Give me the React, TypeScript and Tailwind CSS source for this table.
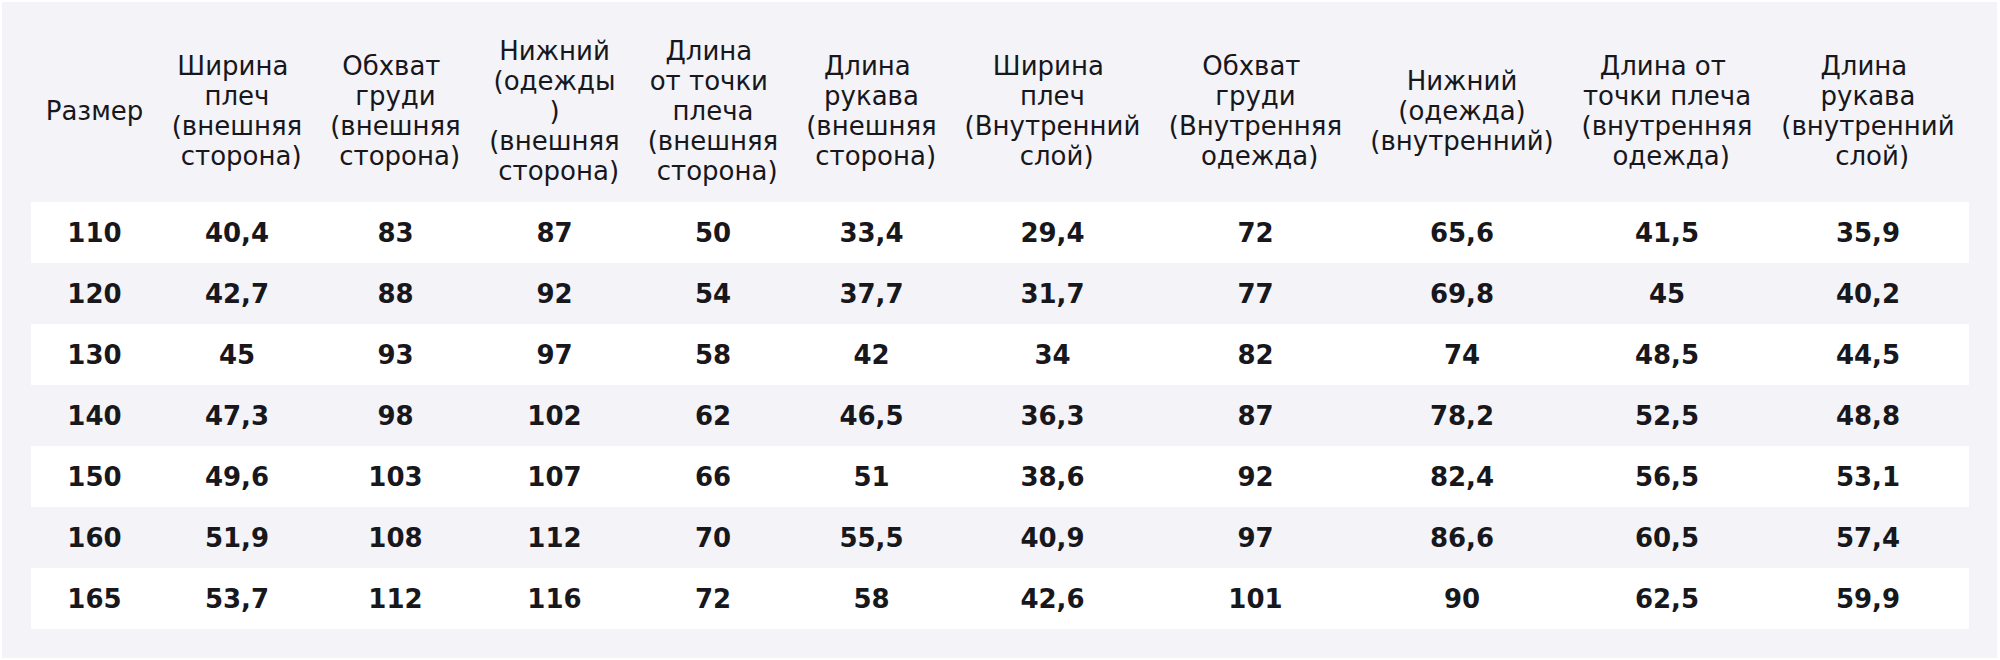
const colWidths = [
  "w-[127px]",
  "w-[158px]",
  "w-[159px]",
  "w-[159px]",
  "w-[158px]",
  "w-[159px]",
  "w-[203px]",
  "w-[203px]",
  "w-[210px]",
  "w-[200px]",
  "w-[202px]",
];

// each header line is drawn as-is (whitespace kept) so the odd centring of the source survives
const headers: string[][] = [
  ["Размер"],
  ["Ширина ", "плеч", "(внешняя", " сторона)"],
  ["Обхват ", "груди", "(внешняя", " сторона)"],
  ["Нижний", "(одежды", ")", "(внешняя", " сторона)"],
  ["Длина ", "от точки ", "плеча", "(внешняя", " сторона)"],
  ["Длина ", "рукава", "(внешняя", " сторона)"],
  ["Ширина ", "плеч", "(Внутренний", " слой)"],
  ["Обхват ", "груди", "(Внутренняя", " одежда)"],
  ["Нижний", "(одежда)", "(внутренний)"],
  ["Длина от ", "точки плеча", "(внутренняя", " одежда)"],
  ["Длина ", "рукава", "(внутренний", " слой)"],
];

const rows: string[][] = [
  ["110", "40,4", "83", "87", "50", "33,4", "29,4", "72", "65,6", "41,5", "35,9"],
  ["120", "42,7", "88", "92", "54", "37,7", "31,7", "77", "69,8", "45", "40,2"],
  ["130", "45", "93", "97", "58", "42", "34", "82", "74", "48,5", "44,5"],
  ["140", "47,3", "98", "102", "62", "46,5", "36,3", "87", "78,2", "52,5", "48,8"],
  ["150", "49,6", "103", "107", "66", "51", "38,6", "92", "82,4", "56,5", "53,1"],
  ["160", "51,9", "108", "112", "70", "55,5", "40,9", "97", "86,6", "60,5", "57,4"],
  ["165", "53,7", "112", "116", "72", "58", "42,6", "101", "90", "62,5", "59,9"],
];

export default function App() {
  return (
    <div className="w-[2000px] h-[660px] bg-white pt-[2px] pl-[2px] font-['DejaVu_Sans',sans-serif] text-[#17171c]">
      <div className="w-[1995px] h-[656px] bg-[#f3f3f8] pt-[18px] pl-[29px]">
        <table className="table-fixed w-[1938px] border-collapse">
          <colgroup>
            {colWidths.map((w, i) => (
              <col key={i} className={w} />
            ))}
          </colgroup>
          <thead>
            <tr className="h-[182px]">
              {headers.map((lines, i) => (
                <th key={i} className="p-0 align-middle text-center font-normal text-[26px] leading-[30px]">
                  {lines.map((line, j) => (
                    <div key={j} className="whitespace-pre">
                      {line}
                    </div>
                  ))}
                </th>
              ))}
            </tr>
          </thead>
          <tbody>
            {rows.map((row, r) => (
              <tr key={r} className={r % 2 === 0 ? "h-[61px] bg-white" : "h-[61px] bg-[#f3f3f8]"}>
                {row.map((cell, c) => (
                  <td key={c} className="p-0 align-middle text-center font-bold text-[26px] leading-[30px]">
                    {cell}
                  </td>
                ))}
              </tr>
            ))}
          </tbody>
        </table>
      </div>
    </div>
  );
}
